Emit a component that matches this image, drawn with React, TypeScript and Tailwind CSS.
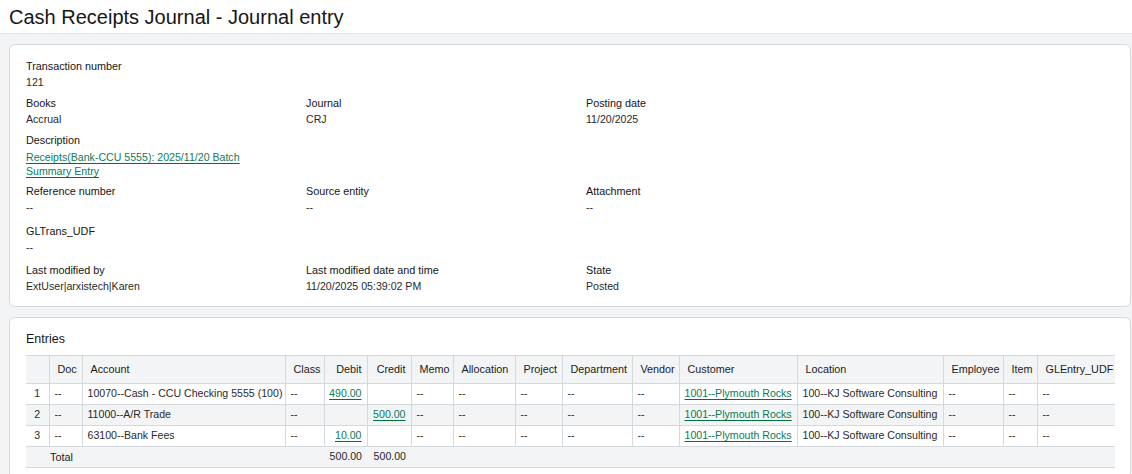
import type { ReactNode } from 'react';

const FONT = { fontFamily: '"Liberation Sans", Arial, sans-serif' };

type Entry = {
  n: number;
  account: string;
  debit?: string;
  credit?: string;
};

const ENTRIES: Entry[] = [
  { n: 1, account: '10070--Cash - CCU Checking 5555 (100)', debit: '490.00' },
  { n: 2, account: '11000--A/R Trade', credit: '500.00' },
  { n: 3, account: '63100--Bank Fees', debit: '10.00' },
];

const COLS = [
  { key: 'n', label: '', w: 23 },
  { key: 'doc', label: 'Doc', w: 33 },
  { key: 'account', label: 'Account', w: 203 },
  { key: 'class', label: 'Class', w: 39 },
  { key: 'debit', label: 'Debit', w: 43, right: true },
  { key: 'credit', label: 'Credit', w: 44, right: true },
  { key: 'memo', label: 'Memo', w: 42 },
  { key: 'allocation', label: 'Allocation', w: 62 },
  { key: 'project', label: 'Project', w: 47 },
  { key: 'department', label: 'Department', w: 70 },
  { key: 'vendor', label: 'Vendor', w: 47 },
  { key: 'customer', label: 'Customer', w: 118 },
  { key: 'location', label: 'Location', w: 146 },
  { key: 'employee', label: 'Employee', w: 60 },
  { key: 'item', label: 'Item', w: 34 },
  { key: 'udf', label: 'GLEntry_UDF', w: 78 },
];

function Link({ children }: { children: ReactNode }) {
  return (
    <a
      href="#"
      className="text-[#0b7b58] underline decoration-[#00703c] underline-offset-2"
    >
      {children}
    </a>
  );
}

function Field({ label, children }: { label: string; children: ReactNode }) {
  return (
    <div>
      <p className="text-[10.8px] leading-4 text-[#151515]">{label}</p>
      <div className="mt-px text-[10.6px] leading-[14px] text-[#2a2a2a]">{children}</div>
    </div>
  );
}

function Card({ children, className = '' }: { children: ReactNode; className?: string }) {
  return (
    <section
      className={`rounded-md border border-[#d5d9dd] bg-white pl-[16px] pr-[14px] ${className}`}
    >
      {children}
    </section>
  );
}

export default function App() {
  return (
    <div style={FONT} className="min-h-screen bg-[#f2f4f5] text-[#2a2a2a]">
      <header className="flex h-[34px] items-center border-b border-[#e3e6e9] bg-white pl-[9px]">
        <h1 className="text-[20px] leading-6 text-[#161616]">
          Cash Receipts Journal - Journal entry
        </h1>
      </header>

      <main className="pl-[9px] pr-[1px] pt-[10px]">
        {/* Détails de l'écriture */}
        <Card className="pb-[13px] pt-[13px]">
          <div className="grid grid-cols-[280px_280px_1fr]">
            <Field label="Transaction number">121</Field>
          </div>
          <div className="mt-[6px] grid grid-cols-[280px_280px_1fr]">
            <Field label="Books">Accrual</Field>
            <Field label="Journal">CRJ</Field>
            <Field label="Posting date">11/20/2025</Field>
          </div>
          <div className="mt-[6px] grid grid-cols-[280px_280px_1fr]">
            <div className="max-w-[240px]">
              <p className="text-[10.8px] leading-4 text-[#151515]">Description</p>
              <div className="mt-[2px] text-[10.6px] leading-[14px]">
                <Link>Receipts(Bank-CCU 5555): 2025/11/20 Batch Summary Entry</Link>
              </div>
            </div>
          </div>
          <div className="mt-[5px] grid grid-cols-[280px_280px_1fr]">
            <Field label="Reference number">--</Field>
            <Field label="Source entity">--</Field>
            <Field label="Attachment">--</Field>
          </div>
          <div className="mt-[9px] grid grid-cols-[280px_280px_1fr]">
            <Field label="GLTrans_UDF">--</Field>
          </div>
          <div className="mt-[8px] grid grid-cols-[280px_280px_1fr]">
            <Field label="Last modified by">ExtUser|arxistech|Karen</Field>
            <Field label="Last modified date and time">11/20/2025 05:39:02 PM</Field>
            <Field label="State">Posted</Field>
          </div>
        </Card>

        {/* Lignes */}
        <Card className="mt-[10px] pb-[10px] pt-[13px]">
          <h2 className="text-[12.5px] leading-4 text-[#151515]">Entries</h2>
          <table className="mt-[8px] w-[1089px] table-fixed border-collapse text-[10.6px] text-[#2a2a2a]">
            <colgroup>
              {COLS.map((c) => (
                <col key={c.key} style={{ width: c.w }} />
              ))}
            </colgroup>
            <thead>
              <tr className="h-[28px] border-y border-[#d4d9de] bg-[#f2f4f5]">
                {COLS.map((c, i) => (
                  <th
                    key={c.key}
                    className={`whitespace-nowrap text-[10.8px] font-normal text-[#1c1c1c] ${
                      i > 0 ? 'border-l border-[#d4d9de]' : ''
                    } ${c.right ? 'pr-[5px] text-right' : 'pl-2 text-left'}`}
                  >
                    {c.label}
                  </th>
                ))}
              </tr>
            </thead>
            <tbody>
              {ENTRIES.map((e) => (
                <tr
                  key={e.n}
                  className={`h-[21px] border-b border-[#d4d9de] ${
                    e.n % 2 === 0 ? 'bg-[#f2f4f5]' : 'bg-white'
                  }`}
                >
                  <td className="text-center">{e.n}</td>
                  <Td>--</Td>
                  <Td>{e.account}</Td>
                  <Td>--</Td>
                  <Td right>{e.debit ? <Link>{e.debit}</Link> : null}</Td>
                  <Td right>{e.credit ? <Link>{e.credit}</Link> : null}</Td>
                  <Td>--</Td>
                  <Td>--</Td>
                  <Td>--</Td>
                  <Td>--</Td>
                  <Td>--</Td>
                  <Td>
                    <Link>1001--Plymouth Rocks</Link>
                  </Td>
                  <Td>100--KJ Software Consulting</Td>
                  <Td>--</Td>
                  <Td>--</Td>
                  <Td>--</Td>
                </tr>
              ))}
              <tr className="h-[21px] border-b border-[#d4d9de] bg-[#f2f4f5]">
                <td />
                <td colSpan={3} className="pl-px text-[10.8px] text-[#1c1c1c]">
                  Total
                </td>
                <td className="pr-[5px] text-right">500.00</td>
                <td className="pr-[5px] text-right">500.00</td>
                <td colSpan={10} />
              </tr>
            </tbody>
          </table>
        </Card>
      </main>
    </div>
  );
}

function Td({ children, right }: { children?: ReactNode; right?: boolean }) {
  return (
    <td
      className={`whitespace-nowrap border-l border-[#d4d9de] ${
        right ? 'pr-[5px] text-right' : 'pl-[5px]'
      }`}
    >
      {children}
    </td>
  );
}
